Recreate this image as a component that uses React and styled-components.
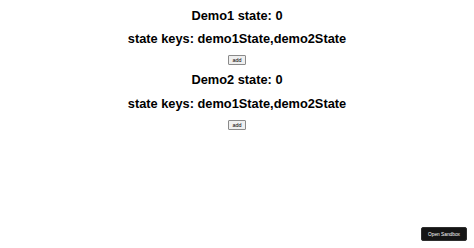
import React, { useState } from 'react';
import styled, { createGlobalStyle } from 'styled-components';

const GlobalStyle = createGlobalStyle`
  html, body {
    margin: 0;
    padding: 0;
    background: #ffffff;
  }
  body {
    font-family: "Liberation Sans", Arial, Helvetica, sans-serif;
    color: #000000;
  }
`;

const Page = styled.div`
  text-align: center;
`;

const Title = styled.h1`
  font-size: 12.8px;
  font-weight: 700;
  line-height: 14.7px;
  margin: 8.6px 0;
`;

const AddButton = styled.button`
  display: block;
  margin: 0 auto;
  font-family: "Liberation Sans", Arial, sans-serif;
  font-size: 5.4px;
  line-height: 6.4px;
  padding: 0.6px 3.6px;
  color: #000000;
  background: #efefef;
  border: 0.8px solid #8a8a8a;
  border-radius: 1px;
  cursor: pointer;
`;

const SandboxLink = styled.a`
  position: fixed;
  right: 7px;
  bottom: 7px;
  display: flex;
  align-items: center;
  height: 14px;
  padding: 0 6px;
  box-sizing: border-box;
  background: #151515;
  border: 0.5px solid #2e2e2e;
  border-radius: 2px;
  color: #ffffff;
  font-family: "Liberation Sans", Arial, sans-serif;
  font-size: 4.8px;
  text-decoration: none;
`;

function Demo({ name, stateKeys }) {
  const [count, setCount] = useState(0);

  return (
    <section>
      <Title>
        {name} state: {count}
      </Title>
      <Title>state keys: {stateKeys.join(',')}</Title>
      <AddButton type="button" onClick={() => setCount((c) => c + 1)}>
        add
      </AddButton>
    </section>
  );
}

export default function App() {
  const stateKeys = ['demo1State', 'demo2State'];

  return (
    <>
      <GlobalStyle />
      <Page>
        <Demo name="Demo1" stateKeys={stateKeys} />
        <Demo name="Demo2" stateKeys={stateKeys} />
      </Page>
      <SandboxLink href="#">Open Sandbox</SandboxLink>
    </>
  );
}
